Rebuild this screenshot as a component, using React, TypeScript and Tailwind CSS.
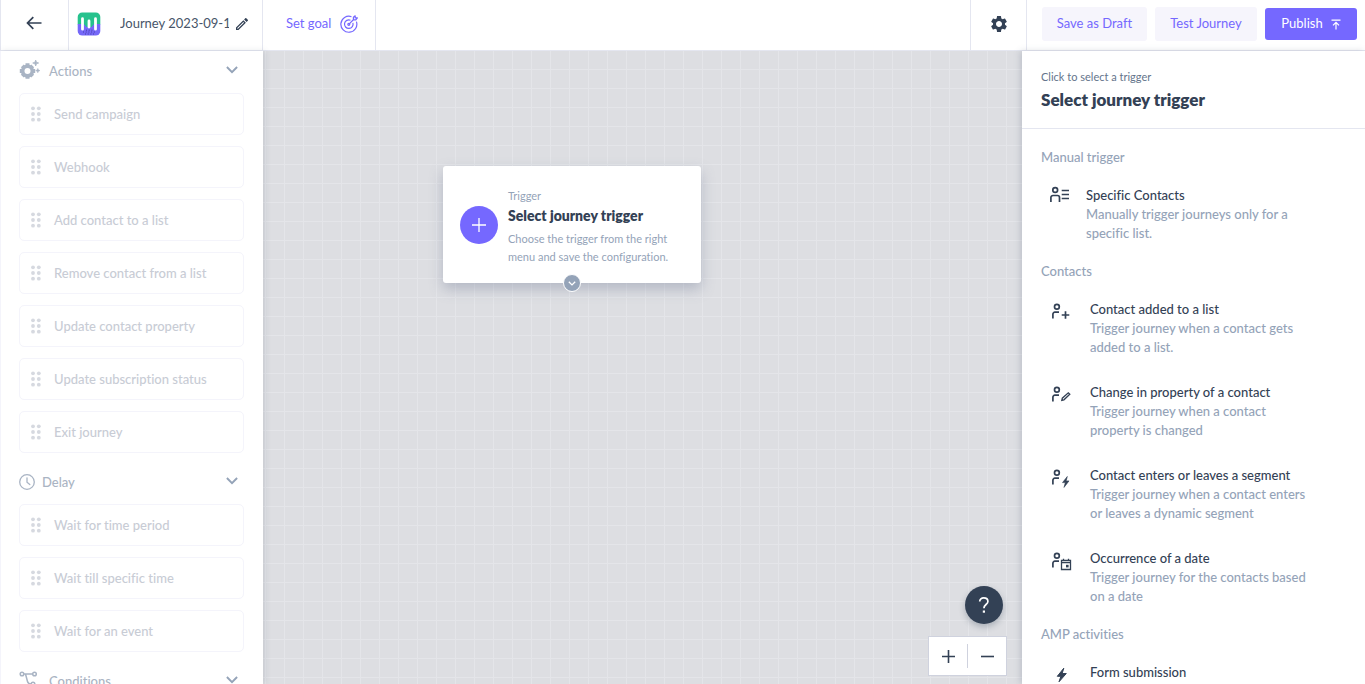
import React from "react";
import { MdSettings, MdOutlineEdit } from "react-icons/md";

const actions = [
  "Send campaign",
  "Webhook",
  "Add contact to a list",
  "Remove contact from a list",
  "Update contact property",
  "Update subscription status",
  "Exit journey",
];
const delays = ["Wait for time period", "Wait till specific time", "Wait for an event"];

function Logo() {
  return (
    <svg width="24" height="24" viewBox="0 0 24 24" aria-hidden="true">
      <defs>
        <clipPath id="logo-clip">
          <rect x="0.7" y="0.5" width="22.600" height="23" rx="4.500" />
        </clipPath>
      </defs>
      <g clipPath="url(#logo-clip)">
        <rect x="0" y="0" width="24" height="12.500" fill="#26c28d" />
        <rect x="0" y="12" width="24" height="12" fill="#7568f8" />
        <path d="M6 11l3.500 4h5L18 11z" fill="#26c28d" />
      </g>
      <path d="M5.500 6.700v10.500M18.500 6.700v10.500" stroke="#fff" strokeWidth="2.800" strokeLinecap="round" />
      <path d="M12 9v6" stroke="#fff" strokeWidth="2.800" strokeLinecap="round" />
      <path d="M6 20h13M8 22h9M9 18.200h7" stroke="#41399a" strokeWidth="0.900" strokeDasharray="1 1.700" />
    </svg>
  );
}

function TargetIcon() {
  return (
    <svg width="19" height="18" viewBox="0 0 19 18" fill="none" stroke="#7568ff" strokeWidth="1.200" aria-hidden="true">
      <path d="M11.500 1.700A8 8 0 1 0 16.400 6.600" />
      <path d="M10.500 5.200A4.300 4.300 0 1 0 12.900 7.900" />
      <path d="M8.800 9.300l4.800-4.800M13.400 4.700V2.300L15.200.8v2.100h2.200l-1.600 1.900z" strokeLinejoin="round" />
      <circle cx="8.800" cy="9.300" r="1" />
    </svg>
  );
}

function ActionsIcon() {
  return (
    <svg width="21" height="20" viewBox="0 0 21 20" aria-hidden="true">
      <g fill="#a9b4c4">
        <circle cx="8.500" cy="11" r="6.600" />
        <g stroke="#a9b4c4" strokeWidth="4">
          <path d="M8.500 3.300v15.400M.8 11h15.400M3.300 5.800l10.400 10.400M13.700 5.800L3.300 16.200" />
        </g>
        <path d="M16.700 0l.8 2.200 2.200.8-2.200.8-.8 2.200-.8-2.200-2.200-.8 2.200-.8z" stroke="#a9b4c4" strokeWidth=".7" />
        <path d="M18.800 8.500l.6 1.500 1.500.6-1.500.6-.6 1.500-.6-1.500-1.500-.6 1.500-.6z" stroke="#a9b4c4" strokeWidth=".6" />
      </g>
      <circle cx="8.500" cy="11" r="3" fill="#fff" />
    </svg>
  );
}

function ClockIcon() {
  return (
    <svg width="16" height="16" viewBox="0 0 16 16" fill="none" stroke="#a9b4c4" strokeWidth="1.300" aria-hidden="true">
      <circle cx="8" cy="8" r="7.300" />
      <path d="M8 3.800V8.300l2.800 2.200" strokeLinecap="round" />
    </svg>
  );
}

function BranchIcon() {
  return (
    <svg width="21" height="19" viewBox="0 0 21 19" fill="none" stroke="#a9b4c4" strokeWidth="1.500" aria-hidden="true">
      <circle cx="3" cy="3" r="1.800" />
      <circle cx="15.500" cy="3" r="1.800" />
      <circle cx="14" cy="13" r="1.800" />
      <path d="M4.800 3h8.900M6.500 3l2 7.500c.4 1.600 1.400 2.500 3.700 2.500" />
    </svg>
  );
}

function Chevron() {
  return (
    <svg width="12" height="8" viewBox="0 0 12 8" fill="none" stroke="#94a3b8" strokeWidth="1.900" aria-hidden="true">
      <path d="M.9 1l5.100 5.200L11.100 1" />
    </svg>
  );
}

function DragDots() {
  return (
    <svg width="10" height="16" viewBox="0 0 10 16" fill="#d6d9e0" aria-hidden="true">
      <circle cx="2" cy="2.300" r="1.900" />
      <circle cx="7.800" cy="2.300" r="1.900" />
      <circle cx="2" cy="8" r="1.900" />
      <circle cx="7.800" cy="8" r="1.900" />
      <circle cx="2" cy="13.700" r="1.900" />
      <circle cx="7.800" cy="13.700" r="1.900" />
    </svg>
  );
}

function PublishIcon() {
  return (
    <svg width="10" height="11" viewBox="0 0 10 11" fill="none" stroke="#fff" strokeWidth="1.200" aria-hidden="true">
      <path d="M.5 1.100h9M5 10.500V3.600M2 6.400l3-3 3 3" />
    </svg>
  );
}

function PersonList() {
  return (
    <svg width="24" height="24" viewBox="0 0 24 24" fill="none" stroke="#334155" strokeWidth="1.700" aria-hidden="true">
      <circle cx="6.200" cy="4" r="2.400" />
      <path d="M1.900 16V11.500a2 2 0 0 1 2-2h4.600a2 2 0 0 1 2 2V16M12.700 4.500h7.300M12.700 8.500h7.300M12.700 12.500h7.300" />
    </svg>
  );
}

function Person({ children }: { children: React.ReactNode }) {
  return (
    <svg width="24" height="24" viewBox="0 0 24 24" fill="none" stroke="#334155" strokeWidth="1.700" aria-hidden="true">
      <circle cx="7.900" cy="6.800" r="2.400" />
      <path d="M3.900 18.500V14.200a2 2 0 0 1 2-2H10" />
      {children}
    </svg>
  );
}

function Section({ title, children }: { title: string; children: React.ReactNode }) {
  return (
    <section className="flex flex-col gap-[19px]">
      <h3 className="text-[13px] leading-[19px] font-medium text-[#94a3b8]">{title}</h3>
      <div className="flex flex-col gap-[26px]">{children}</div>
    </section>
  );
}

function Trigger({
  icon,
  title,
  text,
  wide,
}: {
  icon: React.ReactNode;
  title: string;
  text?: string;
  wide?: boolean;
}) {
  return (
    <button type="button" className={wide ? "flex gap-[13px] pl-2 text-left" : "flex gap-[17px] pl-2 text-left"}>
      <span className="shrink-0">{icon}</span>
      <span className="block max-w-[226px] text-[13px] leading-[19px] font-medium">
        <span className="block text-[#334155]">{title}</span>
        {text && <span className="block text-[#94a3b8]">{text}</span>}
      </span>
    </button>
  );
}

function Group({
  icon,
  title,
  items,
  first,
}: {
  icon: React.ReactNode;
  title: string;
  items: string[];
  first?: boolean;
}) {
  return (
    <section>
      <button
        type="button"
        className={
          first
            ? "flex h-[42px] w-full items-center justify-between pr-[6px] pb-1"
            : "flex h-[51px] w-full items-center justify-between pt-[6px] pr-[6px]"
        }
      >
        <span className="flex items-center gap-[7px] text-[13px] font-medium text-[#aab4c3]">
          {icon}
          <span className={title === "Delay" ? "pt-[3px]" : "pt-[3px] pl-[2px]"}>{title}</span>
        </span>
        <span className="pb-px">
          <Chevron />
        </span>
      </button>
      <ul className="flex flex-col gap-[11px]">
        {items.map((item) => (
          <li
            key={item}
            className="flex h-[42px] items-center gap-[13px] rounded-[5px] border border-[#f4f4fb] pl-[11px] text-[13px] font-medium text-[#c8ccd5]"
          >
            <DragDots />
            <span className="pt-[2px]">{item}</span>
          </li>
        ))}
      </ul>
    </section>
  );
}

export default function App() {
  return (
    <div className="flex h-screen flex-col overflow-hidden bg-white font-['Lato',sans-serif] text-[#334155] [font-variant-ligatures:none]">
      <header className="flex h-[51px] shrink-0 border-b border-l border-[#e4e6f0]">
        <div className="flex w-[68px] items-center justify-center border-r border-[#e4e6f0] pr-[2px] pb-1">
          <button type="button" aria-label="Back">
            <svg width="16" height="14" viewBox="0 0 16 14" fill="none" stroke="#334155" strokeWidth="1.700" aria-hidden="true">
              <path d="M15.500 7H1.500M7.300 1.200L1.500 7l5.800 5.800" />
            </svg>
          </button>
        </div>
        <div className="flex w-[194px] items-center border-r border-[#e4e6f0] pb-[3px] pl-2">
          <Logo />
          <input
            aria-label="Journey name"
            defaultValue="Journey 2023-09-12"
            className="ml-[19px] w-[109px] bg-transparent text-[13px] text-[#475569] outline-none"
          />
          <button type="button" aria-label="Rename journey" className="ml-[5px]">
            <MdOutlineEdit size={16} color="#334155" />
          </button>
        </div>
        <button
          type="button"
          className="flex w-[113px] items-center gap-[9px] border-r border-[#e4e6f0] pb-[3px] pl-[23px] text-[13px] text-[#7568ff]"
        >
          Set goal
          <TargetIcon />
        </button>
        <div className="ml-auto flex">
          <button
            type="button"
            aria-label="Settings"
            className="flex w-[57px] items-center justify-center border-x border-[#e4e6f0] pb-[3px]"
          >
            <MdSettings size={20} color="#334155" />
          </button>
          <div className="flex items-center gap-2 pr-2 pb-[2px] pl-[15px] text-[13px]">
            <button type="button" className="h-[34px] w-[105px] rounded-[3px] bg-[#f6f5fc] text-[#7568ff]">
              Save as Draft
            </button>
            <button type="button" className="h-[34px] w-[102px] rounded-[3px] bg-[#f6f5fc] text-[#7568ff]">
              Test Journey
            </button>
            <button
              type="button"
              className="flex h-8 w-[92px] items-center justify-center gap-2 rounded-[3px] bg-[#7568ff] text-white"
            >
              Publish
              <PublishIcon />
            </button>
          </div>
        </div>
      </header>

      <div className="flex min-h-0 flex-1">
        <aside className="z-10 w-[263px] shrink-0 overflow-hidden border-l border-[#f4f4fb] bg-white pr-[19px] pl-[18px] shadow-[2px_0_6px_rgba(100,110,130,0.18)]">
          <Group first icon={<ActionsIcon />} title="Actions" items={actions} />
          <Group icon={<ClockIcon />} title="Delay" items={delays} />
          <Group icon={<BranchIcon />} title="Conditions" items={[]} />
        </aside>

        <main className="relative min-w-0 flex-1 overflow-hidden bg-[#dddee2] bg-[linear-gradient(to_right,#e4e5e9_1px,transparent_1px),linear-gradient(to_bottom,#e4e5e9_1px,transparent_1px)] bg-[size:19px_19px] bg-[position:2px_18px]">
          <div className="absolute top-[115px] left-[180px] flex h-[117px] w-[258px] items-center gap-[10px] rounded-[3px] bg-white pl-[17px] shadow-[0_6px_14px_rgba(100,112,140,0.35)]">
            <button
              type="button"
              aria-label="Add trigger"
              className="flex size-[38px] shrink-0 items-center justify-center rounded-full bg-[#7568ff]"
            >
              <svg width="14" height="14" viewBox="0 0 14 14" stroke="#fff" strokeWidth="1.300" aria-hidden="true">
                <path d="M7 0v14M0 7h14" />
              </svg>
            </button>
            <div className="pt-1 text-[11px] leading-[18px] text-[#94a3b8]">
              <p>Trigger</p>
              <h2 className="pb-[3px] text-[14px] leading-[22px] font-extrabold text-[#334155]">Select journey trigger</h2>
              <p className="w-[172px]">Choose the trigger from the right menu and save the configuration.</p>
            </div>
            <span className="absolute -bottom-[9px] left-[120px] flex size-[18px] items-center justify-center rounded-full border border-white bg-[#94a3b8]">
              <svg width="8" height="5" viewBox="0 0 8 5" fill="none" stroke="#fff" strokeWidth="1.300" aria-hidden="true">
                <path d="M.8.7L4 3.900 7.200.7" />
              </svg>
            </span>
          </div>

          <button
            type="button"
            aria-label="Help"
            className="absolute right-[19px] bottom-[60px] flex size-[38px] items-center justify-center rounded-full bg-[#334155] shadow-[0_3px_6px_rgba(51,65,85,0.3)]"
          >
            <svg width="12" height="18" viewBox="0 0 12 18" fill="none" stroke="#fff" strokeWidth="1.700" aria-hidden="true">
              <path d="M1.700 5.600C1.700 3.200 3.500 1.900 5.700 1.900s4.200 1.300 4.200 3.500c0 3-4 3.300-4 6.800" />
              <path d="M5.900 14.500v2.200" strokeWidth="2.200" />
            </svg>
          </button>
          <div className="absolute right-[15px] bottom-2 flex h-10 w-[79px] items-center border border-[#cfd2de] bg-white">
            <button type="button" aria-label="Zoom in" className="flex flex-1 justify-center">
              <svg width="13" height="13" viewBox="0 0 13 13" stroke="#334155" strokeWidth="1.600" aria-hidden="true">
                <path d="M6.500 0v13M0 6.500h13" />
              </svg>
            </button>
            <span className="h-6 w-px bg-[#cfd2de]" />
            <button type="button" aria-label="Zoom out" className="flex flex-1 justify-center">
              <svg width="13" height="13" viewBox="0 0 13 13" stroke="#334155" strokeWidth="1.600" aria-hidden="true">
                <path d="M0 6.500h13" />
              </svg>
            </button>
          </div>
        </main>

        <aside className="z-10 w-[343px] shrink-0 overflow-hidden bg-white shadow-[-2px_0_6px_rgba(100,110,130,0.25)]">
          <div className="h-[78px] border-b border-[#e4e6f0] pt-[17px] pl-[19px]">
            <p className="text-[11px] leading-[18px] text-[#64748b]">Click to select a trigger</p>
            <h1 className="text-[17px] leading-7 font-extrabold">Select journey trigger</h1>
          </div>
          <div className="flex flex-col gap-[19px] pt-[19px] pl-[19px]">
            <Section title="Manual trigger">
              <Trigger
                wide
                icon={<PersonList />}
                title="Specific Contacts"
                text="Manually trigger journeys only for a specific list."
              />
            </Section>
            <Section title="Contacts">
              <Trigger
                icon={
                  <Person>
                    <path d="M16.500 11.200v7.600M12.700 15h7.600" />
                  </Person>
                }
                title="Contact added to a list"
                text="Trigger journey when a contact gets added to a list."
              />
              <Trigger
                icon={
                  <Person>
                    <path d="M12.800 17.400l.5-2.200 6-5.400 1.500 1.500-5.900 5.500z" strokeWidth="1.300" />
                  </Person>
                }
                title="Change in property of a contact"
                text="Trigger journey when a contact property is changed"
              />
              <Trigger
                icon={
                  <Person>
                    <path
                      d="M18.300 10.500l-4.800 6.100h2.800l-1.300 4.800 5-6.500h-2.800z"
                      fill="#334155"
                      strokeWidth=".6"
                      strokeLinejoin="round"
                    />
                  </Person>
                }
                title="Contact enters or leaves a segment"
                text="Trigger journey when a contact enters or leaves a dynamic segment"
              />
              <Trigger
                icon={
                  <Person>
                    <path d="M12.500 11.500h9v9h-9zM12.500 13.700h9M14.500 9.700v2M19.500 9.700v2" strokeWidth="1.300" />
                    <path d="M17 15.800h2.600v2.600h-2.600z" fill="#334155" stroke="none" />
                  </Person>
                }
                title="Occurrence of a date"
                text="Trigger journey for the contacts based on a date"
              />
            </Section>
            <Section title="AMP activities">
              <Trigger
                icon={
                  <svg width="24" height="24" viewBox="0 0 24 24" fill="#334155" stroke="#334155" strokeLinejoin="round" aria-hidden="true">
                    <path d="M14.800 5.200L8.300 13.300h3.600L10 18.800 17.300 10.500h-4.200z" />
                  </svg>
                }
                title="Form submission"
              />
            </Section>
          </div>
        </aside>
      </div>
    </div>
  );
}
